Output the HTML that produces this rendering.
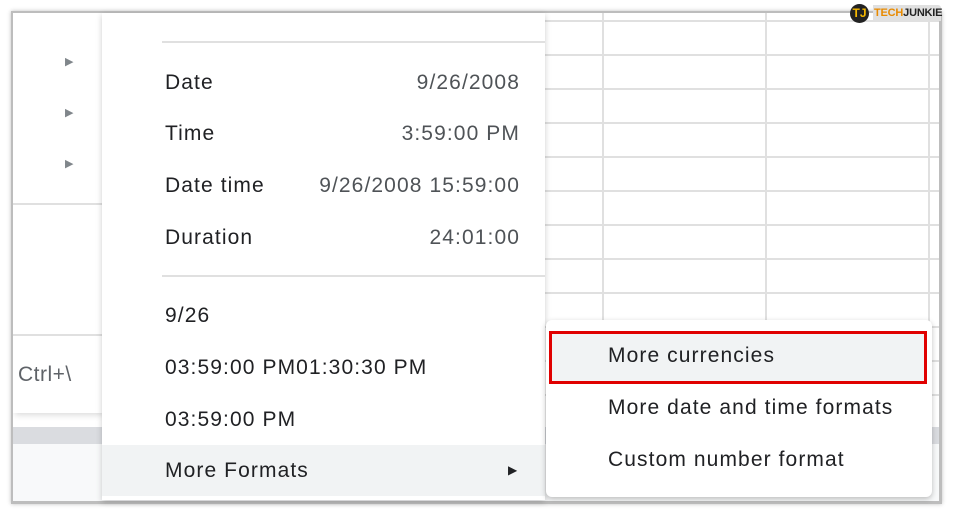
<!DOCTYPE html>
<html><head><style>
*{margin:0;padding:0;box-sizing:border-box}
body{width:953px;height:515px;background:#fff;position:relative;overflow:hidden;font-family:"Liberation Sans",sans-serif}
.a{position:absolute}
.frame{left:11px;top:11px;width:931px;height:493px;border:2px solid #bdbdbd;border-bottom-width:3px;border-right-width:3px;box-shadow:0 0 4px rgba(0,0,0,.25);background:#fff;overflow:hidden}
.hl{position:absolute;height:2px;background:#e0e0e0}
.vl{position:absolute;width:2px;background:#e0e0e0}
.t{position:absolute;font-size:21px;letter-spacing:1.1px;color:#202124;white-space:nowrap;line-height:24px}
.r{position:absolute;font-size:21px;letter-spacing:1.1px;color:#4f5357;white-space:nowrap;line-height:24px;right:0;text-align:right}
</style></head><body>
<div class="a frame">
 <div class="vl" style="left:589px;top:0;height:420px"></div>
 <div class="vl" style="left:752px;top:0;height:420px"></div>
 <div class="vl" style="left:915px;top:0;height:420px"></div>
 <div class="hl" style="left:530px;right:0;top:7px"></div>
 <div class="hl" style="left:530px;right:0;top:41px"></div>
 <div class="hl" style="left:530px;right:0;top:75px"></div>
 <div class="hl" style="left:530px;right:0;top:109px"></div>
 <div class="hl" style="left:530px;right:0;top:143px"></div>
 <div class="hl" style="left:530px;right:0;top:177px"></div>
 <div class="hl" style="left:530px;right:0;top:211px"></div>
 <div class="hl" style="left:530px;right:0;top:245px"></div>
 <div class="hl" style="left:530px;right:0;top:279px"></div>
 <div class="hl" style="left:530px;right:0;top:313px"></div>
 <div class="hl" style="left:530px;right:0;top:347px"></div>
 <div class="hl" style="left:530px;right:0;top:381px"></div>
 <div class="hl" style="left:530px;right:0;top:414px"></div>
 <div class="a" style="left:0;right:0;top:414px;height:17px;background:#dadce0"></div>
 <div class="a" style="left:0;right:0;top:431px;bottom:0;background:#f8f9fa"></div>
 <div class="a" style="left:0;top:0;width:89px;height:400px;background:#fff;box-shadow:2px 2px 6px rgba(0,0,0,.15)">
  <div class="a" style="left:52px;top:42px;font-size:11px;color:#80868b">&#9654;</div>
  <div class="a" style="left:52px;top:93px;font-size:11px;color:#80868b">&#9654;</div>
  <div class="a" style="left:52px;top:144px;font-size:11px;color:#80868b">&#9654;</div>
  <div class="hl" style="left:0;width:89px;top:190px"></div>
  <div class="hl" style="left:0;width:89px;top:321px"></div>
  <div class="t" style="left:5px;top:350px;color:#5f6368;letter-spacing:0.5px">Ctrl+\</div>
 </div>
</div>
<div class="a" style="left:102px;top:13px;width:443px;height:487px;background:#fff;box-shadow:0 2px 6px rgba(0,0,0,.2)">
 <div class="hl" style="left:60px;right:0;top:28px"></div>
 <div class="a" style="left:63px;top:58px;width:355px;height:24px"><span class="t" style="left:0;top:0">Date</span><span class="r" style="top:0">9/26/2008</span></div>
 <div class="a" style="left:63px;top:109px;width:355px;height:24px"><span class="t" style="left:0;top:0">Time</span><span class="r" style="top:0">3:59:00 PM</span></div>
 <div class="a" style="left:63px;top:161px;width:355px;height:24px"><span class="t" style="left:0;top:0">Date time</span><span class="r" style="top:0">9/26/2008 15:59:00</span></div>
 <div class="a" style="left:63px;top:213px;width:355px;height:24px"><span class="t" style="left:0;top:0">Duration</span><span class="r" style="top:0">24:01:00</span></div>
 <div class="hl" style="left:60px;right:0;top:262px"></div>
 <div class="t" style="left:63px;top:291px">9/26</div>
 <div class="t" style="left:63px;top:343px">03:59:00 PM01:30:30 PM</div>
 <div class="t" style="left:63px;top:395px">03:59:00 PM</div>
 <div class="a" style="left:0;right:0;top:432px;height:51px;background:#f1f3f4"></div>
 <div class="t" style="left:63px;top:446px">More Formats</div>
 <div class="a" style="left:406px;top:450px;font-size:12px;color:#202124">&#9654;</div>
</div>
<div class="a" style="left:546px;top:320px;width:386px;height:177px;background:#fff;border-radius:6px;box-shadow:0 2px 6px rgba(0,0,0,.25)">
 <div class="a" style="left:3px;top:11px;width:378px;height:53px;background:#f1f3f4;border:3px solid #e00000"></div>
 <div class="t" style="left:62px;top:24px">More currencies</div>
 <div class="t" style="left:62px;top:76px">More date and time formats</div>
 <div class="t" style="left:62px;top:128px">Custom number format</div>
</div>
<div class="a" style="left:873px;top:5px;width:68px;height:16px;background:#e0e0e0;border-radius:0 3px 0 0"></div>
<div class="a" style="left:850px;top:4px;width:19px;height:19px;border-radius:50%;background:#222;color:#f5b800;font-size:12px;font-weight:bold;text-align:center;line-height:19px">TJ</div>
<div class="a" style="left:874px;top:7px;font-size:11px;font-weight:bold;color:#e88a00;letter-spacing:-.2px">TECH<span style="color:#222">JUNKIE</span></div>
</body></html>
